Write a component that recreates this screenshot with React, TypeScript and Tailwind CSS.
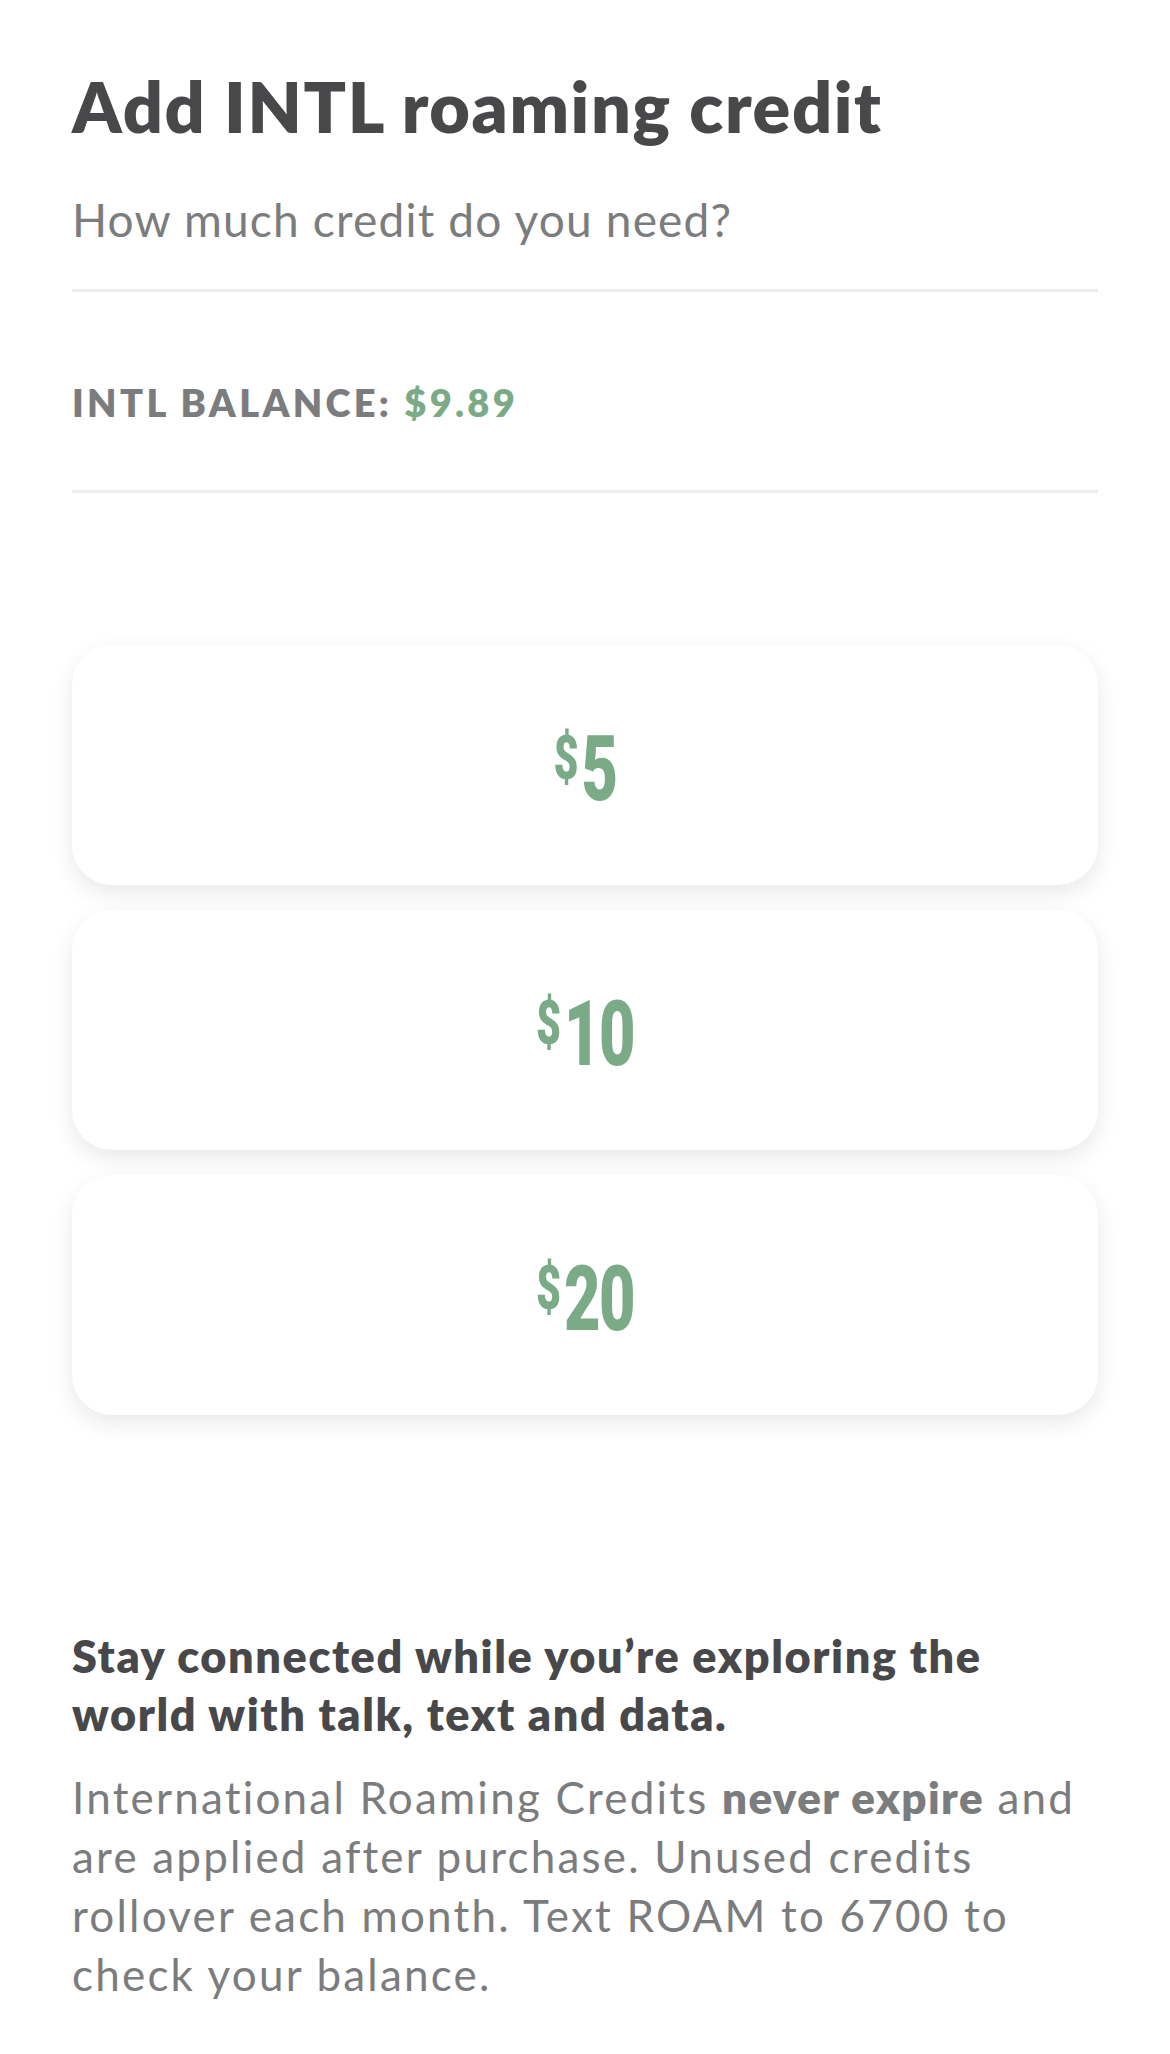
import React from 'react';

const amounts = [5, 10, 20];

const CreditOption = ({ amount }: { amount: number }) => (
  <button className="flex h-[240px] w-full items-center justify-center rounded-[40px] bg-white shadow-[0_8px_22px_rgba(0,0,0,0.09)]">
    <span className="mt-[10px] flex scale-x-[0.7] items-start font-['Roboto',sans-serif] font-black text-[#7aaa86]">
      <span className="mt-[2px] mr-[4px] text-[62px] leading-none">$</span>
      <span className="text-[90px] leading-none tracking-[-2px]">{amount}</span>
    </span>
  </button>
);

export default function App() {
  return (
    <div className="min-h-screen bg-white px-[72px] pt-[66px] pb-[60px] font-['Lato',sans-serif]">
      <h1 className="text-[70px] leading-[80px] font-extrabold tracking-[1.6px] text-[#48484a]">Add INTL roaming credit</h1>
      <p className="mt-[46px] text-[46px] leading-[56px] tracking-[1.2px] text-[#7b7c7e]">How much credit do you need?</p>

      <div className="mt-[41px] h-[3px] bg-[#ececec]" />

      <div className="mt-[87px] text-[38px] leading-[46px] font-extrabold tracking-[3.3px]">
        <span className="text-[#7b7c7e]">INTL BALANCE: </span>
        <span className="text-[#7aaa86]">$9.89</span>
      </div>

      <div className="mt-[65px] h-[3px] bg-[#ececec]" />

      {/* credit choices */}
      <div className="mt-[152px] flex flex-col gap-[25px]">
        {amounts.map((a) => (
          <CreditOption key={a} amount={a} />
        ))}
      </div>

      <h2 className="mt-[212px] text-[45px] leading-[58px] font-extrabold tracking-[1.6px] text-[#48484a]">
        Stay connected while you’re exploring the
        <br />
        world with talk, text and data.
      </h2>
      <p className="mt-[25px] text-[44px] leading-[59px] tracking-[2.2px] text-[#7b7c7e]">
        International Roaming Credits <span className="font-extrabold tracking-[1.4px]">never expire</span> and
        <br />
        are applied after purchase. Unused credits
        <br />
        rollover each month. Text ROAM to 6700 to
        <br />
        check your balance.
      </p>
    </div>
  );
}
